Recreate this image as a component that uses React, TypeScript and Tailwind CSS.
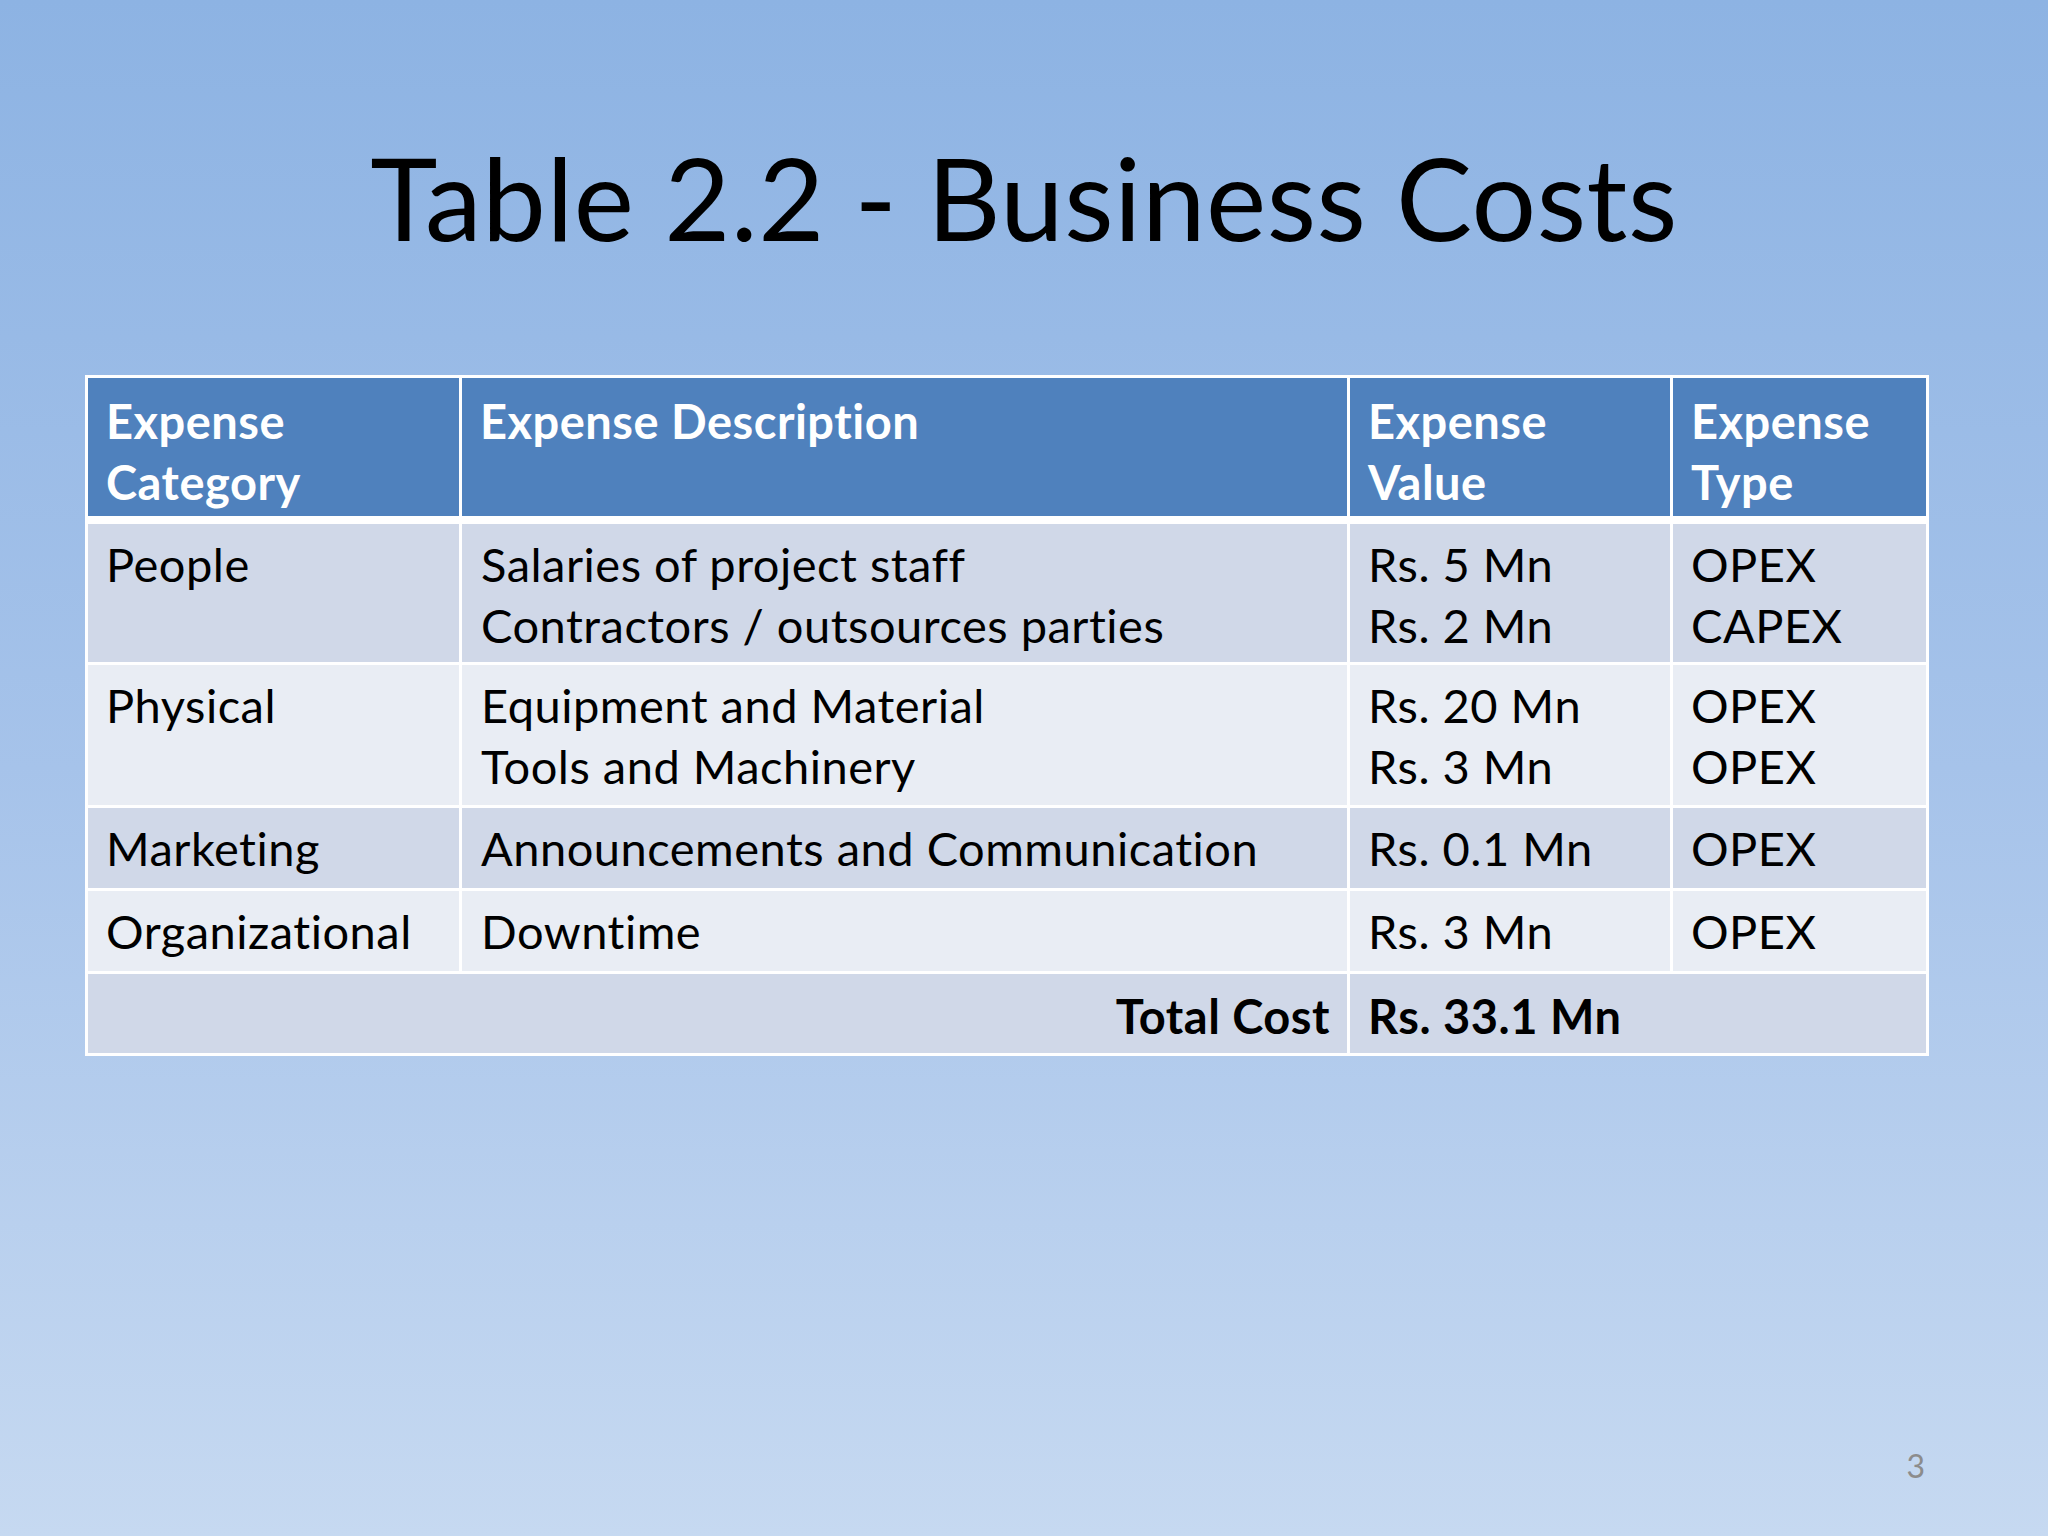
import React from "react";

const bodyRows = [
  {
    cat: "People",
    desc: ["Salaries of project staff", "Contractors / outsources parties"],
    val: ["Rs. 5 Mn", "Rs. 2 Mn"],
    type: ["OPEX", "CAPEX"],
    bg: "bg-[#D0D8E8]",
    h: "h-[138px]",
  },
  {
    cat: "Physical",
    desc: ["Equipment and Material", "Tools and Machinery"],
    val: ["Rs. 20 Mn", "Rs. 3 Mn"],
    type: ["OPEX", "OPEX"],
    bg: "bg-[#E9EDF4]",
    h: "h-[140px]",
  },
  {
    cat: "Marketing",
    desc: ["Announcements and Communication"],
    val: ["Rs. 0.1 Mn"],
    type: ["OPEX"],
    bg: "bg-[#D0D8E8]",
    h: "h-[80px]",
  },
  {
    cat: "Organizational",
    desc: ["Downtime"],
    val: ["Rs. 3 Mn"],
    type: ["OPEX"],
    bg: "bg-[#E9EDF4]",
    h: "h-[80px]",
  },
];

function Lines({ lines }: { lines: string[] }) {
  return (
    <>
      {lines.map((l, i) => (
        <div key={i}>{l}</div>
      ))}
    </>
  );
}

export default function App() {
  return (
    <div className="w-[2048px] h-[1536px] flex flex-col bg-[linear-gradient(to_bottom,#8DB3E3_0%,#A6C3EA_50%,#C6D9F1_100%)] font-['Lato','Open_Sans',sans-serif] text-black [font-variant-ligatures:none]">
      <h1 className="pt-[140px] text-center text-[114px] leading-none font-normal tracking-[0.5px]">
        Table 2.2 - Business Costs
      </h1>

      <div className="mt-[121px] ml-[85px] w-[1844px] bg-white p-[3px] grid grid-cols-[371px_885px_320px_253px] gap-[3px] text-[47px] leading-[61px] tracking-[0.5px]">
        {/* header */}
        {[
          ["Expense", "Category"],
          ["Expense Description"],
          ["Expense", "Value"],
          ["Expense", "Type"],
        ].map((h, i) => (
          <div
            key={i}
            className="h-[138px] mb-[5px] bg-[#4F81BD] text-white font-bold pl-[18px] pr-[17px] pt-[13px]"
          >
            <Lines lines={h} />
          </div>
        ))}

        {bodyRows.map((r, ri) => (
          <React.Fragment key={ri}>
            <div className={`${r.bg} ${r.h} pl-[18px] pr-[17px] pt-[10px]`}>{r.cat}</div>
            <div className={`${r.bg} ${r.h} pl-[19px] pr-[17px] pt-[10px]`}>
              <Lines lines={r.desc} />
            </div>
            <div className={`${r.bg} ${r.h} pl-[18px] pr-[17px] pt-[10px]`}>
              <Lines lines={r.val} />
            </div>
            <div className={`${r.bg} ${r.h} pl-[18px] pr-[17px] pt-[10px]`}>
              <Lines lines={r.type} />
            </div>
          </React.Fragment>
        ))}

        {/* total row */}
        <div className="col-span-2 bg-[#D0D8E8] h-[79px] px-[17px] pt-[12px] text-right font-bold">
          Total Cost
        </div>
        <div className="col-span-2 bg-[#D0D8E8] h-[79px] pl-[18px] pr-[17px] pt-[12px] font-bold">
          Rs. 33.1 Mn
        </div>
      </div>

      <div className="mt-auto flex justify-end pr-[123px] pb-[54px]">
        <span className="text-[32px] leading-none text-[#8C8C8C]">3</span>
      </div>
    </div>
  );
}
